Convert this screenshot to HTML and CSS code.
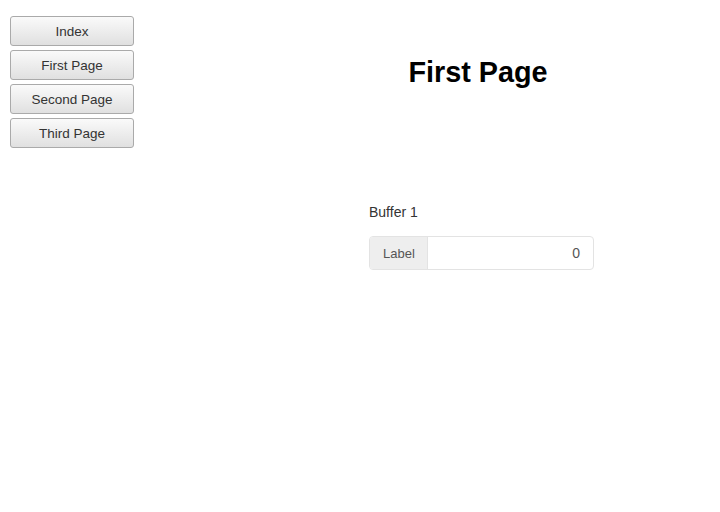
FILE: index.html
```html
<!DOCTYPE html>
<html>
<head>
<meta charset="utf-8">
<link rel="stylesheet" href="styles.css">
</head>
<body>
<div class="layout">
  <nav class="sidebar">
    <button class="nav-btn">Index</button>
    <button class="nav-btn">First Page</button>
    <button class="nav-btn">Second Page</button>
    <button class="nav-btn">Third Page</button>
  </nav>
  <main class="content">
    <h1 class="title">First Page</h1>
    <section class="buffer">
      <div class="buffer-label">Buffer 1</div>
      <div class="input-group">
        <span class="addon">Label</span>
        <span class="value">0</span>
      </div>
    </section>
  </main>
</div>
</body>
</html>
```
FILE: styles.css
```css
html, body {
  margin: 0;
  padding: 0;
  background: #fff;
  font-family: "Liberation Sans", Arial, sans-serif;
  color: #333;
}
.layout {
  display: flex;
  width: 720px;
  height: 512px;
}
.sidebar {
  display: flex;
  flex-direction: column;
  gap: 4px;
  padding: 16px 0 0 10px;
  width: 124px;
}
.nav-btn {
  height: 30px;
  width: 124px;
  font-family: "Liberation Sans", Arial, sans-serif;
  font-size: 13.5px;
  color: #333;
  border: 1px solid #aaa;
  border-radius: 3px;
  background: linear-gradient(#fafafa, #e0e0e0);
  padding: 0;
  margin: 0;
}
.content {
  flex: 1;
  display: flex;
  flex-direction: column;
}
.title {
  margin: 55px 0 0 102px;
  font-size: 28.8px;
  line-height: 34px;
  font-weight: bold;
  color: #000;
  text-align: center;
  width: 484px;
}
.buffer {
  margin: 113px 0 0 235px;
  width: 225px;
}
.buffer-label {
  font-size: 14px;
  line-height: 20px;
  color: #333;
}
.input-group {
  margin-top: 14px;
  display: flex;
  height: 34px;
  box-sizing: border-box;
  border: 1px solid #e3e3e3;
  border-radius: 4px;
  overflow: hidden;
}
.addon {
  display: flex;
  align-items: center;
  padding: 0 13px;
  background: #eee;
  border-right: 1px solid #e3e3e3;
  font-size: 13px;
  color: #555;
  width: 58px;
  box-sizing: border-box;
}
.value {
  flex: 1;
  display: flex;
  align-items: center;
  justify-content: flex-end;
  padding: 0 13px;
  font-size: 14px;
  color: #555;
}
```
